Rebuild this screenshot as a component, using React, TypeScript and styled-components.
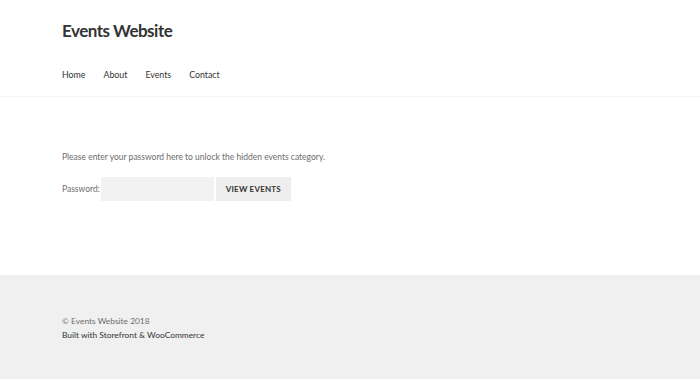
import React from 'react';
import styled, { createGlobalStyle } from 'styled-components';

const GlobalStyle = createGlobalStyle`
  html, body {
    margin: 0;
    padding: 0;
    background: #fff;
  }
  body {
    font-family: Lato, "Open Sans", "Liberation Sans", sans-serif;
    color: #6d6d6d;
    -webkit-font-smoothing: antialiased;
  }
`;

const Page = styled.div`
  display: flex;
  flex-direction: column;
  min-height: 379px;
`;

const Header = styled.header`
  padding: 20px 62px 0;
  border-bottom: 1px solid #f3f3f3;
  height: 76px;
`;

const Title = styled.h1`
  margin: 0;
  font-size: 17px;
  font-weight: 700;
  letter-spacing: -0.5px;
  color: #333;
  line-height: 22px;
`;

const Nav = styled.nav`
  display: flex;
  gap: 18px;
  margin-top: 27px;
`;

const NavLink = styled.a`
  font-size: 8.8px;
  color: #333;
  text-decoration: none;
  line-height: 12px;
`;

const Main = styled.main`
  flex: 1;
  padding: 54px 62px 0;
  height: 178px;
  box-sizing: border-box;
`;

const Intro = styled.p`
  margin: 0;
  font-size: 8.5px;
  line-height: 12px;
`;

const Form = styled.form`
  display: flex;
  align-items: center;
  margin-top: 14px;
`;

const Label = styled.label`
  font-size: 8.5px;
  margin-right: 1px;
`;

const Input = styled.input`
  width: 113px;
  height: 24px;
  box-sizing: border-box;
  border: 0;
  background: #f2f2f2;
  margin-right: 2px;
  outline: none;
`;

const Button = styled.button`
  width: 75px;
  height: 24px;
  border: 0;
  background: #eeeeee;
  color: #333;
  font-family: inherit;
  font-size: 8px;
  font-weight: 700;
  letter-spacing: 0.2px;
`;

const Footer = styled.footer`
  background: #f0f0f0;
  height: 104px;
  padding: 39px 62px 0;
  box-sizing: border-box;
`;

const FooterLine = styled.div<{ $strong?: boolean }>`
  font-size: 8.4px;
  line-height: 14px;
  color: ${p => (p.$strong ? '#333' : '#6d6d6d')};
`;

const App: React.FC = () => {
  return (
    <>
      <GlobalStyle />
      <Page>
        <Header>
          <Title>Events Website</Title>
          <Nav>
            <NavLink href="#">Home</NavLink>
            <NavLink href="#">About</NavLink>
            <NavLink href="#">Events</NavLink>
            <NavLink href="#">Contact</NavLink>
          </Nav>
        </Header>
        <Main>
          <Intro>Please enter your password here to unlock the hidden events category.</Intro>
          <Form onSubmit={e => e.preventDefault()}>
            <Label>Password:</Label>
            <Input type="password" />
            <Button type="submit">VIEW EVENTS</Button>
          </Form>
        </Main>
        <Footer>
          <FooterLine>© Events Website 2018</FooterLine>
          <FooterLine $strong>Built with Storefront &amp; WooCommerce</FooterLine>
        </Footer>
      </Page>
    </>
  );
};

export default App;
